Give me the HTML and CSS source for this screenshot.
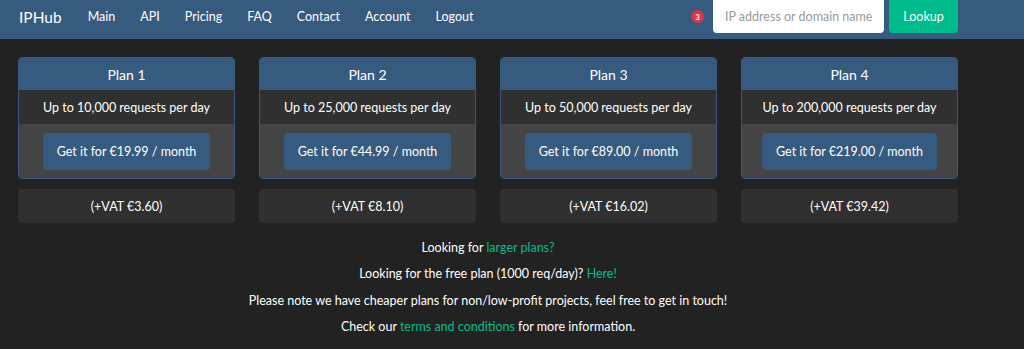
FILE: index.html
```html
<!DOCTYPE html>
<html lang="en">
<head>
<meta charset="utf-8">
<title>IPHub Pricing</title>
<link rel="stylesheet" href="styles.css">
</head>
<body>
<nav class="navbar">
  <div class="nav-inner">
    <a class="brand" href="#">IPHub</a>
    <ul class="nav-links">
      <li><a href="#">Main</a></li>
      <li><a href="#">API</a></li>
      <li><a href="#">Pricing</a></li>
      <li><a href="#">FAQ</a></li>
      <li><a href="#">Contact</a></li>
      <li><a href="#">Account</a></li>
      <li><a href="#">Logout</a></li>
    </ul>
    <div class="nav-right">
      <span class="badge">3</span>
      <input class="search" type="text" placeholder="IP address or domain name">
      <button class="btn-lookup">Lookup</button>
    </div>
  </div>
</nav>
<main class="container">
  <div class="plans">
    <div class="plan">
      <div class="panel">
        <div class="panel-heading">Plan 1</div>
        <div class="panel-body">Up to 10,000 requests per day</div>
        <div class="panel-footer"><a class="btn-buy" href="#">Get it for €19.99 / month</a></div>
      </div>
      <div class="vat">(+VAT €3.60)</div>
    </div>
    <div class="plan">
      <div class="panel">
        <div class="panel-heading">Plan 2</div>
        <div class="panel-body">Up to 25,000 requests per day</div>
        <div class="panel-footer"><a class="btn-buy" href="#">Get it for €44.99 / month</a></div>
      </div>
      <div class="vat">(+VAT €8.10)</div>
    </div>
    <div class="plan">
      <div class="panel">
        <div class="panel-heading">Plan 3</div>
        <div class="panel-body">Up to 50,000 requests per day</div>
        <div class="panel-footer"><a class="btn-buy" href="#">Get it for €89.00 / month</a></div>
      </div>
      <div class="vat">(+VAT €16.02)</div>
    </div>
    <div class="plan">
      <div class="panel">
        <div class="panel-heading">Plan 4</div>
        <div class="panel-body">Up to 200,000 requests per day</div>
        <div class="panel-footer"><a class="btn-buy" href="#">Get it for €219.00 / month</a></div>
      </div>
      <div class="vat">(+VAT €39.42)</div>
    </div>
  </div>
  <div class="notes">
    <p>Looking for <a href="#">larger plans?</a></p>
    <p>Looking for the free plan (1000 req/day)? <a href="#">Here!</a></p>
    <p>Please note we have cheaper plans for non/low-profit projects, feel free to get in touch!</p>
    <p>Check our <a href="#">terms and conditions</a> for more information.</p>
  </div>
</main>
</body>
</html>
```
FILE: styles.css
```css
* { box-sizing: border-box; }
html, body { margin: 0; padding: 0; }
body {
  background: #222222;
  color: #ffffff;
  font-family: Lato, "Open Sans", "Liberation Sans", sans-serif;
  font-size: 12.5px;
  overflow: hidden;
}
a { text-decoration: none; }

.navbar {
  background: #375a7f;
  height: 39px;
}
.nav-inner {
  display: flex;
  align-items: center;
  height: 33px;
  margin-left: 18px;
  width: 940px;
}
.brand {
  color: #ffffff;
  font-size: 15.5px;
  padding-left: 1px;
  margin-right: 13.5px;
}
.nav-links {
  display: flex;
  list-style: none;
  margin: 0;
  padding: 0;
}
.nav-links a {
  display: block;
  color: #ffffff;
  font-size: 12.5px;
  padding: 0 12.5px;
}
.nav-right {
  margin-left: auto;
  display: flex;
  align-items: center;
  height: 33px;
}
.badge {
  width: 13px;
  height: 13px;
  border-radius: 50%;
  background: #dc3545;
  color: #ffffff;
  font-size: 8px;
  font-weight: bold;
  display: flex;
  align-items: center;
  justify-content: center;
  margin-right: 9px;
}
.search {
  width: 171px;
  height: 33px;
  border: none;
  border-radius: 0 0 4px 4px;
  background: #ffffff;
  padding: 0 0 0 12px;
  font-family: inherit;
  font-size: 12.5px;
  color: #444;
  outline: none;
}
.search::placeholder { color: #9a9a9a; }
.btn-lookup {
  width: 69px;
  height: 33px;
  margin-left: 5px;
  border: none;
  border-radius: 0 0 4px 4px;
  background: #00bc8c;
  color: #ffffff;
  font-family: inherit;
  font-size: 12.5px;
}

.container {
  margin-left: 18px;
  width: 940px;
  padding-top: 18px;
}
.plans {
  display: grid;
  grid-template-columns: repeat(4, 1fr);
  column-gap: 24px;
}
.panel {
  border: 1px solid #375a7f;
  border-radius: 4px;
  overflow: hidden;
  text-align: center;
}
.panel-heading {
  background: #375a7f;
  height: 32px;
  display: flex;
  align-items: center;
  justify-content: center;
  font-size: 14px;
}
.panel-body {
  background: #303030;
  height: 34px;
  display: flex;
  align-items: center;
  justify-content: center;
  font-size: 12.5px;
}
.panel-footer {
  background: #444444;
  padding: 9px 0 8px;
  display: flex;
  justify-content: center;
}
.btn-buy {
  display: flex;
  align-items: center;
  height: 37px;
  padding: 0 14px;
  background: #375a7f;
  color: #ffffff;
  border-radius: 4px;
  font-size: 12.5px;
}
.vat {
  margin-top: 10px;
  height: 34px;
  background: #303030;
  border-radius: 4px;
  display: flex;
  align-items: center;
  justify-content: center;
  font-size: 12.5px;
}

.notes {
  margin-top: 11.5px;
  text-align: center;
}
.notes p {
  margin: 0;
  line-height: 26.5px;
  font-size: 12.5px;
}
.notes a { color: #00bc8c; }
```
